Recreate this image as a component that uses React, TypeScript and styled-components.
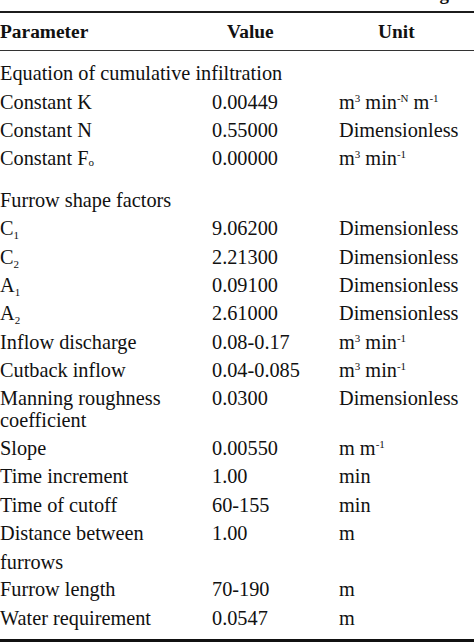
import React from "react";
import styled, { createGlobalStyle } from "styled-components";

const GlobalStyle = createGlobalStyle`
    html, body {
        margin: 0;
        padding: 0;
        background: #ffffff;
    }

    body {
        font-family: "Liberation Serif", "Times New Roman", serif;
        color: #111111;
    }
`

const Page = styled.div`
    width: 474px;
    display: flex;
    flex-direction: column;
`

const Caption = styled.div`
    height: 11px;
    overflow: hidden;
    text-align: right;
    padding-right: 25px;

    span {
        display: block;
        margin-top: -17px;
        font-size: 19px;
        line-height: 22px;
        font-weight: bold;
    }
`

const Table = styled.div`
    border-top: 2px solid #1c1c1c;
    border-bottom: 3px solid #111111;
    display: flex;
    flex-direction: column;
`

const HeadRow = styled.div`
    display: grid;
    grid-template-columns: 212px 127px 1fr;
    height: 37px;
    align-items: center;
    border-bottom: 1px solid #333333;
`

const HeadCell = styled.div<{ $indent?: number }>`
    font-size: 19.4px;
    font-weight: bold;
    padding-left: ${p => p.$indent || 0}px;
    padding-top: 1px;
`

const Body = styled.div`
    display: flex;
    flex-direction: column;
    padding: 9px 0 6px;
`

const Row = styled.div`
    display: grid;
    grid-template-columns: 212px 127px 1fr;
    align-items: start;
`

const Cell = styled.div<{ $loose?: boolean }>`
    font-size: 20.3px;
    line-height: ${p => (p.$loose ? "28.3px" : "21.5px")};
    padding: ${p => (p.$loose ? "0" : "3.4px 0")};

    sup {
        font-size: 11px;
        vertical-align: 7px;
        line-height: 0;
    }

    sub {
        font-size: 11px;
        vertical-align: -4px;
        line-height: 0;
    }
`

const Group = styled.div`
    font-size: 20.3px;
    line-height: 21.5px;
    padding: 3.4px 0;
`

const Spacer = styled.div`
    height: 13.7px;
`

const Small = styled.span`
    font-size: 11px;
    line-height: 0;
    vertical-align: -1px;
`

const m3min = <>m<sup>3</sup> min<sup>-1</sup></>
const dimless = "Dimensionless"

interface Item {
    name: React.ReactNode
    value: string
    unit: React.ReactNode
    loose?: boolean
}

const infiltration: Item[] = [
    { name: "Constant K", value: "0.00449", unit: <>m<sup>3</sup> min<sup>-N</sup> m<sup>-1</sup></> },
    { name: "Constant N", value: "0.55000", unit: dimless },
    { name: <>Constant F<Small>o</Small></>, value: "0.00000", unit: m3min },
]

const furrow: Item[] = [
    { name: <>C<sub>1</sub></>, value: "9.06200", unit: dimless },
    { name: <>C<sub>2</sub></>, value: "2.21300", unit: dimless },
    { name: <>A<sub>1</sub></>, value: "0.09100", unit: dimless },
    { name: <>A<sub>2</sub></>, value: "2.61000", unit: dimless },
    { name: "Inflow discharge", value: "0.08-0.17", unit: m3min },
    { name: "Cutback inflow", value: "0.04-0.085", unit: m3min },
    { name: <>Manning roughness<br />coefficient</>, value: "0.0300", unit: dimless },
    { name: "Slope", value: "0.00550", unit: <>m m<sup>-1</sup></> },
    { name: "Time increment", value: "1.00", unit: "min" },
    { name: "Time of cutoff", value: "60-155", unit: "min" },
    { name: <>Distance between<br />furrows</>, value: "1.00", unit: "m", loose: true },
    { name: "Furrow length", value: "70-190", unit: "m" },
    { name: "Water requirement", value: "0.0547", unit: "m" },
]

function Rows(props: { items: Item[] }) {
    return (
        <>
            {props.items.map((item, i) => (
                <Row key={i}>
                    <Cell $loose={item.loose}>{item.name}</Cell>
                    <Cell>{item.value}</Cell>
                    <Cell>{item.unit}</Cell>
                </Row>
            ))}
        </>
    )
}

function App() {
    return (
        <Page>
            <GlobalStyle />
            <Caption>
                <span>Table 1 Data used for the furrow modeling</span>
            </Caption>
            <Table>
                <HeadRow>
                    <HeadCell>Parameter</HeadCell>
                    <HeadCell $indent={15}>Value</HeadCell>
                    <HeadCell $indent={39}>Unit</HeadCell>
                </HeadRow>
                <Body>
                    <Group>Equation of cumulative infiltration</Group>
                    <Rows items={infiltration} />
                    <Spacer />
                    <Group>Furrow shape factors</Group>
                    <Rows items={furrow} />
                </Body>
            </Table>
        </Page>
    );
}

export default App;
